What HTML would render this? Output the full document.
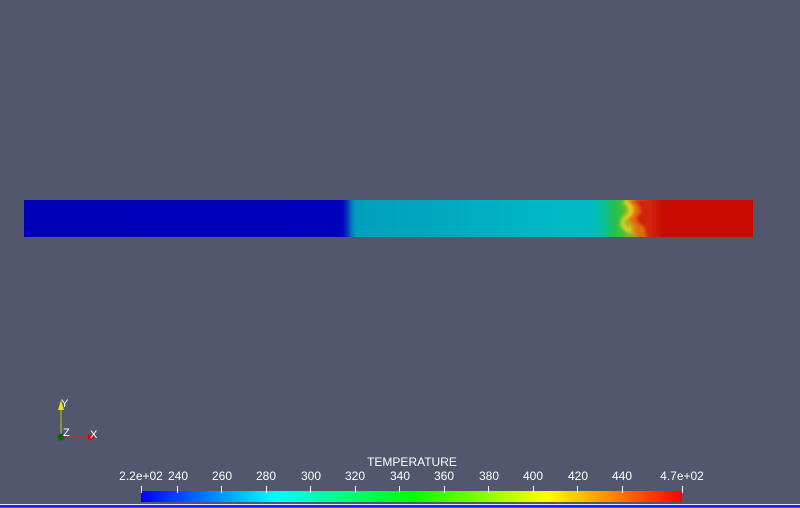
<!DOCTYPE html>
<html><head><style>
html,body{margin:0;padding:0}
body{width:800px;height:508px;background:#52576e;position:relative;overflow:hidden;font-family:"Liberation Sans",sans-serif}
.bar{position:absolute;left:24px;top:200px;width:729px;height:37px;
background:linear-gradient(90deg,#0000b8 0px,#0000bc 316px,#0010b8 320px,#0040b8 324px,#0080bc 328px,#00a0bc 332px,#00a6c0 400px,#00b8c4 520px,#00bcc0 568px,#08c0a0 578px,#20c050 590px,#50c030 600px,#d0b020 606px,#e06010 616px,#d02008 628px,#c80a00 640px,#c80a00 729px)}
.g{position:absolute;left:600px;top:200px;width:50px;height:37px}
.cb{position:absolute;left:141px;top:491px;width:541px;height:11px;
background:linear-gradient(90deg,#0000ff 0%,#0080ff 12.5%,#00ffff 25%,#00ff80 37.5%,#00ff00 50%,#80ff00 62.5%,#ffff00 75%,#ff8000 87.5%,#ff0000 100%)}
.t{position:absolute;top:486px;width:1px;height:7px;background:#fff}
.l{position:absolute;top:469px;color:#fff;font-size:12px;transform:translateX(-50%);white-space:nowrap}
</style></head><body>
<div class="bar"></div>
<svg class="g" width="50" height="37" viewBox="0 0 50 37">
<defs><filter id="b"><feGaussianBlur stdDeviation="1.5"/></filter></defs>
<g filter="url(#b)">
<path d="M24 0 C34 4 36 10 32 15 C26 18 28 24 38 26 L40 37 L50 37 L50 0 Z" fill="#e07010"/>
<path d="M32 0 C40 5 42 11 38 15 C34 18 36 24 44 27 L46 37 L50 37 L50 0 Z" fill="#d02008"/>
<path d="M24 1 C32 6 34 11 28 16 C20 20 22 27 30 31" stroke="#e8d020" stroke-width="4" fill="none"/>
<path d="M20 22 C18 28 24 34 34 37" stroke="#40c040" stroke-width="3" fill="none"/>
</g>
</svg>
<svg style="position:absolute;left:0;top:390px" width="120" height="60">
<line x1="61" y1="47" x2="61" y2="14" stroke="#a0a040" stroke-width="1.5"/>
<polygon points="58,20 64,20 61,10" fill="#e8e800"/>
<line x1="61" y1="47" x2="90" y2="47" stroke="#d02020" stroke-width="1"/>
<polygon points="88,44 88,50 95,47" fill="#e00000"/>
<circle cx="61" cy="47" r="3.5" fill="#106010"/>
<text x="61" y="17" fill="#fff" font-size="11" font-family="Liberation Sans">Y</text>
<text x="63" y="46" fill="#fff" font-size="11" font-family="Liberation Sans">Z</text>
<text x="90" y="48" fill="#fff" font-size="11" font-family="Liberation Sans">X</text>
</svg>
<div class="l" style="left:412px;top:455px">TEMPERATURE</div>
<div class="cb"></div>
<div class="t" style="left:141px"></div><div class="l" style="left:141px">2.2e+02</div>
<div class="t" style="left:177px"></div><div class="l" style="left:178px">240</div>
<div class="t" style="left:221px"></div><div class="l" style="left:222px">260</div>
<div class="t" style="left:266px"></div><div class="l" style="left:266px">280</div>
<div class="t" style="left:310px"></div><div class="l" style="left:311px">300</div>
<div class="t" style="left:355px"></div><div class="l" style="left:355px">320</div>
<div class="t" style="left:399px"></div><div class="l" style="left:400px">340</div>
<div class="t" style="left:444px"></div><div class="l" style="left:444px">360</div>
<div class="t" style="left:488px"></div><div class="l" style="left:489px">380</div>
<div class="t" style="left:533px"></div><div class="l" style="left:533px">400</div>
<div class="t" style="left:577px"></div><div class="l" style="left:578px">420</div>
<div class="t" style="left:622px"></div><div class="l" style="left:622px">440</div>
<div class="t" style="left:682px"></div><div class="l" style="left:682px">4.7e+02</div>
<div style="position:absolute;left:0;top:504px;width:800px;height:1px;background:#e8e8f0"></div>
<div style="position:absolute;left:0;top:505px;width:800px;height:2px;background:#2020ff"></div>
</body></html>
